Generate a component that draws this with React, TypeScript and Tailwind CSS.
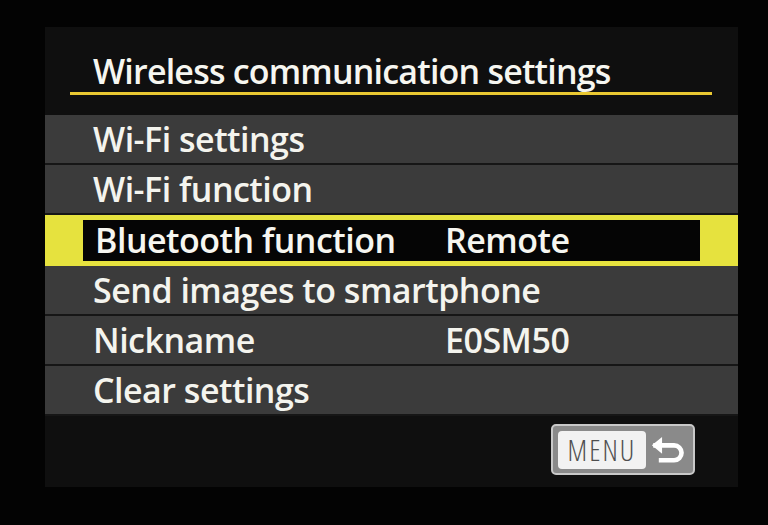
import React from "react";

type Row = { label: string; value?: string; selected?: boolean };

const rows: Row[] = [
  { label: "Wi-Fi settings" },
  { label: "Wi-Fi function" },
  { label: "Bluetooth function", value: "Remote", selected: true },
  { label: "Send images to smartphone" },
  { label: "Nickname", value: "E0SM50" },
  { label: "Clear settings" },
];

const font = { fontFamily: '"Open Sans", "DejaVu Sans Condensed", sans-serif' };

function MenuRow({ row }: { row: Row }) {
  if (row.selected) {
    return (
      <div className="h-[51px] bg-[#e6e23e] px-[38px] py-[5px]">
        <div className="flex h-full items-center bg-[#050505] pl-[12px] text-[34px] font-semibold leading-[41px] tracking-[-0.5px] text-[#f6f6f0]">
          <span className="w-[350px] whitespace-nowrap">{row.label}</span>
          <span>{row.value}</span>
        </div>
      </div>
    );
  }
  return (
    <div className="flex h-[50px] items-center border-b-2 border-[#161616] bg-[#3b3b3b] pl-[48px] text-[34px] font-semibold leading-[48px] tracking-[-0.5px] text-[#f4f4ee]">
      <span className="w-[352px] whitespace-nowrap">{row.label}</span>
      {row.value && <span>{row.value}</span>}
    </div>
  );
}

export default function App() {
  return (
    <div className="h-[525px] w-[768px] overflow-hidden bg-[#030303] pl-[45px] pt-[27px]" style={font}>
      <div className="flex h-[460px] w-[693px] flex-col bg-[#0f0f0f]">
        <div className="flex h-[88px] flex-col">
          <div className="pl-[48px] pt-[23px] text-[34px] font-semibold leading-[42px] tracking-[-0.8px] text-[#f6f6f0] whitespace-nowrap">
            Wireless communication settings
          </div>
          <div className="ml-[25px] h-[3px] w-[642px] bg-[#e9c832]" />
        </div>
        <div className="flex flex-col">
          {rows.map((r) => (
            <MenuRow key={r.label} row={r} />
          ))}
        </div>
        <div className="flex flex-1 justify-end pr-[43px] pt-[8px]">
          <div className="flex h-[51px] w-[144px] items-center rounded-[5px] border-2 border-[#c9c9c9] bg-[#8a8a8a] pl-[5px] pr-[6px]">
            <div
              className="flex h-[38px] w-[90px] items-center justify-center rounded-[4px] bg-[#f2f2f2] text-[29px] font-light tracking-[2px] text-[#4f4f4f]"
              style={{ fontStretch: "75%" }}
            >
              MENU
            </div>
            <svg viewBox="0 0 40 32" className="ml-[4px] h-[30px] w-[38px]">
              <path
                d="M6 11 H26 A8 8 0 0 1 26 27 H12"
                fill="none"
                stroke="#ffffff"
                strokeWidth="5"
                strokeLinecap="square"
              />
              <path d="M2 11 L13 2 L13 20 Z" fill="#ffffff" />
            </svg>
          </div>
        </div>
      </div>
    </div>
  );
}
